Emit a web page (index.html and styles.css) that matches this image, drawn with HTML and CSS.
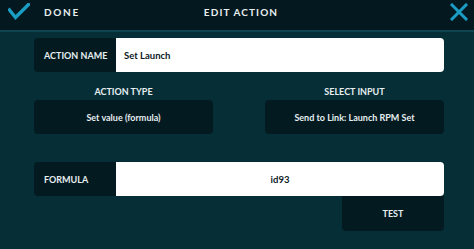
FILE: index.html
```html
<!DOCTYPE html>
<html>
<head>
<meta charset="utf-8">
<link rel="stylesheet" href="styles.css">
</head>
<body>
<div class="app">
  <header class="topbar">
    <div class="done">
      <svg class="check" width="22" height="18" viewBox="0 0 22 18"><path d="M1.5 7 L7.5 14.5 L20.5 1.5" fill="none" stroke="#1b9dc3" stroke-width="3.4" stroke-linecap="square"/></svg>
      <span class="done-text">DONE</span>
    </div>
    <div class="title">EDIT ACTION</div>
    <div class="close">
      <svg width="18" height="18" viewBox="0 0 18 18"><path d="M2 2 L16 16 M16 2 L2 16" stroke="#1b9dc3" stroke-width="3" stroke-linecap="square"/></svg>
    </div>
  </header>
  <main class="content">
    <div class="field-row">
      <div class="field-label">ACTION NAME</div>
      <div class="field-input">Set Launch</div>
    </div>
    <div class="selects">
      <div class="select-col">
        <div class="select-title">ACTION TYPE</div>
        <div class="select-box">Set value (formula)</div>
      </div>
      <div class="select-col">
        <div class="select-title">SELECT INPUT</div>
        <div class="select-box">Send to Link: Launch RPM Set</div>
      </div>
    </div>
    <div class="field-row formula-row">
      <div class="field-label">FORMULA</div>
      <div class="field-input centered">id93</div>
    </div>
    <div class="test-wrap">
      <div class="test-btn">TEST</div>
    </div>
  </main>
</div>
</body>
</html>
```
FILE: styles.css
```css
* { box-sizing: border-box; }
html, body { margin: 0; padding: 0; }
body {
  width: 474px;
  height: 249px;
  overflow: hidden;
  background: #062e37;
  font-family: Lato, "Open Sans", sans-serif;
  font-weight: 700;
  color: #ffffff;
}
.app { width: 474px; height: 249px; }
.topbar {
  height: 32px;
  background: #04191f;
  border-bottom: 2px solid #0e4350;
  display: grid;
  grid-template-columns: minmax(0, 1fr) auto minmax(0, 1fr);
  align-items: center;
  padding: 0 6px 7px 8px;
}
.done { display: flex; align-items: center; gap: 14px; }
.check { display: block; }
.done-text {
  font-size: 10px;
  letter-spacing: 1.7px;
  color: #e8eef0;
}
.title {
  text-align: center;
  font-size: 10px;
  letter-spacing: 1.1px;
  color: #e8eef0;
  padding-left: 6px;
}
.close { display: flex; justify-content: flex-end; align-items: center; }
.close svg { display: block; }
.content {
  padding: 6px 30px 0 34px;
}
.field-row {
  display: flex;
  height: 34px;
}
.field-label {
  width: 82px;
  background: #041a21;
  border-radius: 4px 0 0 4px;
  display: flex;
  align-items: center;
  padding-left: 10px;
  font-size: 9px;
  color: #e6eef0;
}
.field-input {
  flex: 1;
  background: #ffffff;
  border-radius: 0 4px 4px 0;
  color: #0b1a1f;
  display: flex;
  align-items: center;
  padding-left: 8px;
  font-size: 9.5px;
}
.field-input.centered { justify-content: center; padding-left: 0; }
.selects {
  display: grid;
  grid-template-columns: 179px 179px;
  justify-content: space-between;
  margin-top: 12px;
}
.select-title {
  height: 16px;
  line-height: 16px;
  text-align: center;
  font-size: 9px;
  color: #e6eef0;
}
.select-box {
  height: 34px;
  background: #041a21;
  border-radius: 4px;
  display: flex;
  align-items: center;
  justify-content: center;
  font-size: 9px;
  color: #e6eef0;
}
.formula-row { margin-top: 28px; }
.test-wrap { display: flex; justify-content: flex-end; }
.test-btn {
  width: 102px;
  height: 35px;
  background: #041a21;
  border-radius: 0 0 4px 4px;
  display: flex;
  align-items: center;
  justify-content: center;
  font-size: 9px;
  color: #e6eef0;
}
```
